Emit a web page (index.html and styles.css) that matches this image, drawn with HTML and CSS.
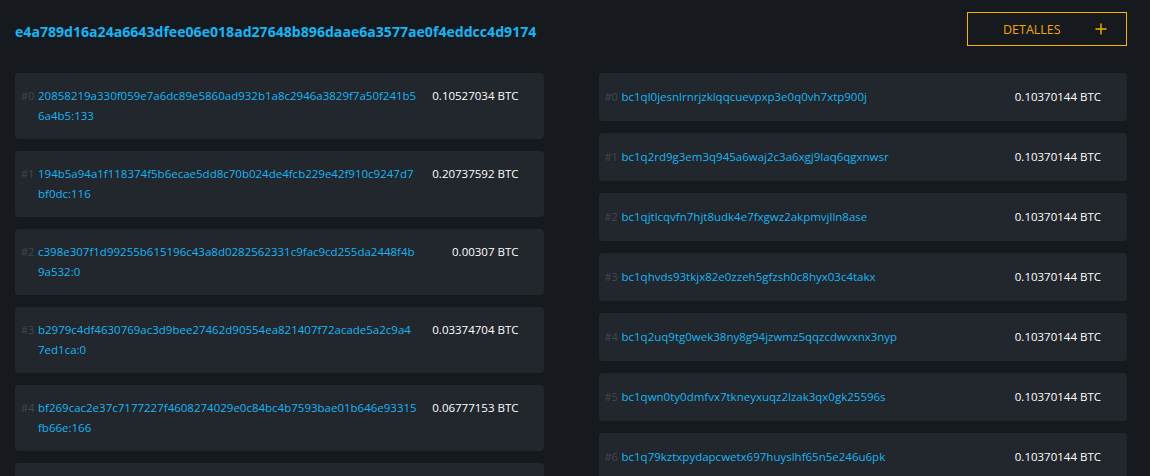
FILE: index.html
```html
<!DOCTYPE html>
<html lang="es">
<head>
<meta charset="utf-8">
<title>Transacción</title>
<link rel="stylesheet" href="styles.css">
</head>
<body>
<div class="page">
  <header class="tx-header">
    <a class="txid" href="#">e4a789d16a24a6643dfee06e018ad27648b896daae6a3577ae0f4eddcc4d9174</a>
    <button class="details-btn" type="button">
      <span>DETALLES</span>
      <svg class="plus" width="12" height="12" viewBox="0 0 12 12" aria-hidden="true"><path d="M6 0.5V11.5M0.5 6H11.5" stroke="#f5b400" stroke-width="1.4" fill="none"/></svg>
    </button>
  </header>
  <div class="io">
    <div class="col">
      <div class="card vin">
        <span class="idx">#0</span>
        <a class="hash" href="#">20858219a330f059e7a6dc89e5860ad932b1a8c2946a3829f7a50f241b56a4b5:133</a>
        <span class="amount">0.10527034 BTC</span>
      </div>
      <div class="card vin">
        <span class="idx">#1</span>
        <a class="hash" href="#">194b5a94a1f118374f5b6ecae5dd8c70b024de4fcb229e42f910c9247d7bf0dc:116</a>
        <span class="amount">0.20737592 BTC</span>
      </div>
      <div class="card vin">
        <span class="idx">#2</span>
        <a class="hash" href="#">c398e307f1d99255b615196c43a8d0282562331c9fac9cd255da2448f4b9a532:0</a>
        <span class="amount">0.00307 BTC</span>
      </div>
      <div class="card vin">
        <span class="idx">#3</span>
        <a class="hash" href="#">b2979c4df4630769ac3d9bee27462d90554ea821407f72acade5a2c9a47ed1ca:0</a>
        <span class="amount">0.03374704 BTC</span>
      </div>
      <div class="card vin">
        <span class="idx">#4</span>
        <a class="hash" href="#">bf269cac2e37c7177227f4608274029e0c84bc4b7593bae01b646e93315fb66e:166</a>
        <span class="amount">0.06777153 BTC</span>
      </div>
      <div class="card vin">
        <span class="idx">#5</span>
        <a class="hash" href="#">a71c3e0b59d24f68e1b0c7a93d5f2e48b6c91a0d37e5f28c4b6a9d1e03f7c2b5:12</a>
        <span class="amount">0.01209480 BTC</span>
      </div>
    </div>
    <div class="col">
      <div class="card vout"><span class="idx">#0</span><a class="hash" href="#">bc1ql0jesnlrnrjzklqqcuevpxp3e0q0vh7xtp900j</a><span class="amount">0.10370144 BTC</span></div>
      <div class="card vout"><span class="idx">#1</span><a class="hash" href="#">bc1q2rd9g3em3q945a6waj2c3a6xgj9laq6qgxnwsr</a><span class="amount">0.10370144 BTC</span></div>
      <div class="card vout"><span class="idx">#2</span><a class="hash" href="#">bc1qjtlcqvfn7hjt8udk4e7fxgwz2akpmvjlln8ase</a><span class="amount">0.10370144 BTC</span></div>
      <div class="card vout"><span class="idx">#3</span><a class="hash" href="#">bc1qhvds93tkjx82e0zzeh5gfzsh0c8hyx03c4takx</a><span class="amount">0.10370144 BTC</span></div>
      <div class="card vout"><span class="idx">#4</span><a class="hash" href="#">bc1q2uq9tg0wek38ny8g94jzwmz5qqzcdwvxnx3nyp</a><span class="amount">0.10370144 BTC</span></div>
      <div class="card vout"><span class="idx">#5</span><a class="hash" href="#">bc1qwn0ty0dmfvx7tkneyxuqz2lzak3qx0gk25596s</a><span class="amount">0.10370144 BTC</span></div>
      <div class="card vout"><span class="idx">#6</span><a class="hash" href="#">bc1q79kztxpydapcwetx697huyslhf65n5e246u6pk</a><span class="amount">0.10370144 BTC</span></div>
    </div>
  </div>
</div>
</body>
</html>
```
FILE: styles.css
```css
html, body {
  margin: 0;
  padding: 0;
  background: #16191e;
  height: 100%;
  overflow: hidden;
}
body {
  font-family: "Open Sans", "Liberation Sans", sans-serif;
  color: #ffffff;
}
.page {
  padding: 12px 23px 0 15px;
}
.tx-header {
  display: flex;
  align-items: center;
  justify-content: space-between;
  height: 34px;
}
.txid {
  color: #15b6f3;
  font-weight: 700;
  font-size: 14.1px;
  text-decoration: none;
  padding-top: 4px;
}
.details-btn {
  width: 160px;
  height: 34px;
  box-sizing: border-box;
  border: 1px solid #f5b400;
  background: transparent;
  color: #f0a800;
  font-family: "Open Sans", "Liberation Sans", sans-serif;
  font-size: 12.5px;
  display: flex;
  align-items: center;
  padding: 0 19px 0 35px;
  justify-content: space-between;
  cursor: pointer;
}
.plus { display: block; }
.io {
  display: grid;
  grid-template-columns: 1fr 1fr;
  column-gap: 55px;
  margin-top: 27px;
}
.col {
  display: flex;
  flex-direction: column;
  gap: 12px;
}
.card {
  background: #22262d;
  border-radius: 4px;
  display: flex;
  align-items: flex-start;
  font-size: 11.5px;
  line-height: 20px;
  padding: 13px 25px 13px 6px;
}
.card.vout {
  padding: 14px 26px 14px 6px;
}
.idx {
  color: #414852;
  font-size: 11px;
  width: 17px;
  flex: none;
}
.hash {
  color: #15b6f3;
  text-decoration: none;
  word-break: break-all;
  flex: 1;
  min-width: 0;
}
.vin .hash {
  max-width: 379px;
}
.amount {
  margin-left: auto;
  padding-left: 14px;
  white-space: nowrap;
  color: #ffffff;
}
```
